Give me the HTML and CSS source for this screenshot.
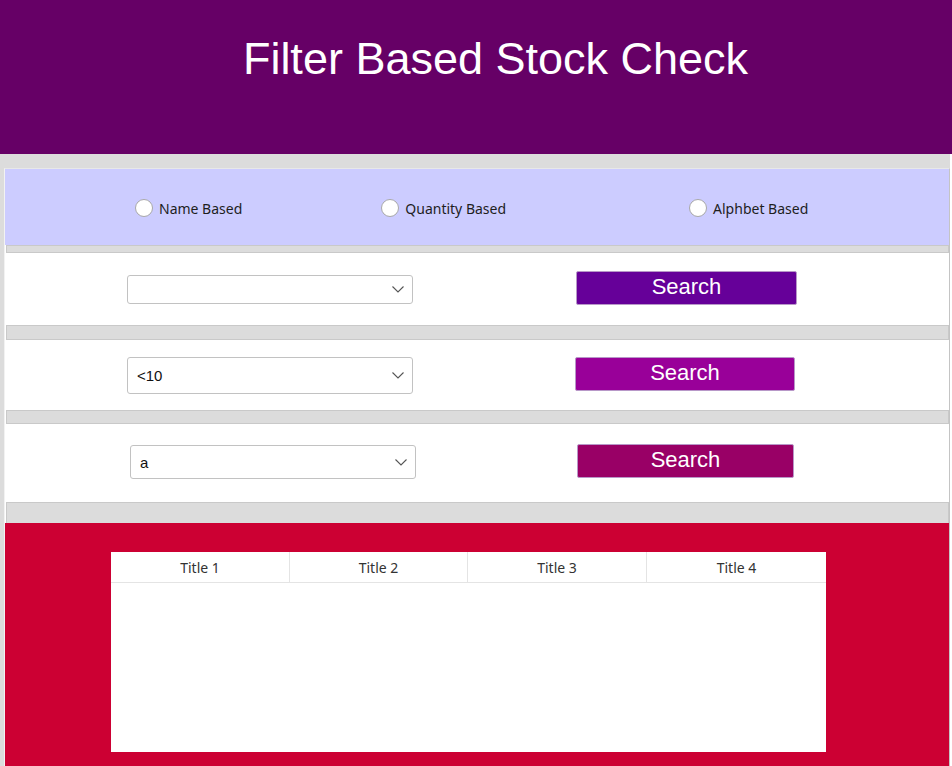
FILE: index.html
```html
<!DOCTYPE html>
<html lang="en">
<head>
<meta charset="utf-8">
<title>Filter Based Stock Check</title>
<link rel="stylesheet" href="styles.css">
</head>
<body>
<header class="top">
  <h1 class="title">Filter Based Stock Check</h1>
</header>
<div class="page">
  <div class="panel">
    <div class="radios">
      <label class="radio r1"><span class="dot"></span>Name Based</label>
      <label class="radio r2"><span class="dot"></span>Quantity Based</label>
      <label class="radio r3"><span class="dot"></span>Alphbet Based</label>
    </div>
    <div class="sep sep1"></div>
    <div class="row row1">
      <div class="select">
        <span class="val"></span>
        <svg class="chev" width="12" height="7" viewBox="0 0 12 7"><path d="M0.5 0.5 L6 6 L11.5 0.5" fill="none" stroke="#555" stroke-width="1.1"/></svg>
      </div>
      <button class="btn btn1">Search</button>
    </div>
    <div class="sep sep2"></div>
    <div class="row row2">
      <div class="select tall">
        <span class="val">&lt;10</span>
        <svg class="chev" width="12" height="7" viewBox="0 0 12 7"><path d="M0.5 0.5 L6 6 L11.5 0.5" fill="none" stroke="#555" stroke-width="1.1"/></svg>
      </div>
      <button class="btn btn2">Search</button>
    </div>
    <div class="sep sep3"></div>
    <div class="row row3">
      <div class="select">
        <span class="val">a</span>
        <svg class="chev" width="12" height="7" viewBox="0 0 12 7"><path d="M0.5 0.5 L6 6 L11.5 0.5" fill="none" stroke="#555" stroke-width="1.1"/></svg>
      </div>
      <button class="btn btn3">Search</button>
    </div>
    <div class="sep sep4"></div>
    <div class="results">
      <div class="table">
        <div class="th">Title 1</div>
        <div class="th">Title 2</div>
        <div class="th">Title 3</div>
        <div class="th">Title 4</div>
      </div>
    </div>
  </div>
</div>
</body>
</html>
```
FILE: styles.css
```css
html, body {
  margin: 0;
  padding: 0;
  background: #ffffff;
  overflow: hidden;
}

.top {
  height: 154px;
  background: #660066;
  box-sizing: border-box;
  padding-top: 33px;
  padding-left: 39px;
}

.title {
  margin: 0;
  font-family: "Liberation Sans", Arial, sans-serif;
  font-weight: normal;
  font-size: 45px;
  line-height: 52px;
  color: #ffffff;
  text-align: center;
}

.page {
  background: #dcdcdc;
  padding-top: 14px;
  padding-left: 4px;
  width: 946px;
}

.panel {
  border-left: 1px solid #f2f2f2;
  border-right: 1px solid #c4c4c4;
  border-top: 1px solid #e8e8e8;
  background: #ffffff;
}

.radios {
  height: 76px;
  background: #ccccff;
  display: flex;
  align-items: center;
  padding-top: 2px;
  box-sizing: border-box;
  font-family: "Noto Sans", "Open Sans", sans-serif;
  font-size: 14px;
  color: #1e1e1e;
}

.radio {
  display: flex;
  align-items: center;
}

.r1 { margin-left: 130px; }
.r2 { margin-left: 139px; }
.r3 { margin-left: 183px; }

.dot {
  width: 18px;
  height: 18px;
  border-radius: 50%;
  background: #ffffff;
  border: 1px solid #a8a8a8;
  box-sizing: border-box;
  margin-right: 6px;
}

.sep {
  background: #dcdcdc;
  border: 1px solid #c9c9c9;
  margin-left: 1px;
  box-sizing: border-box;
}
.sep1 { height: 8px; }
.sep2 { height: 15px; }
.sep3 { height: 14px; }
.sep4 { height: 21px; border-bottom: none; }

.row {
  display: flex;
  align-items: center;
  background: #ffffff;
}
.row1 { height: 72px; padding-left: 122px; }
.row2 { height: 70px; padding-left: 122px; }
.row3 { height: 78px; padding-left: 125px; }

.select {
  width: 286px;
  height: 29px;
  box-sizing: border-box;
  border: 1px solid #c2c2c2;
  border-radius: 3px;
  background: #ffffff;
  display: flex;
  align-items: center;
  justify-content: space-between;
  padding: 0 8px 0 9px;
  font-family: "Liberation Sans", Arial, sans-serif;
  font-size: 15px;
  color: #111111;
}
.select.tall { height: 37px; }
.row3 .select { height: 34px; margin-top: -2px; }

.chev { display: block; }

.btn {
  height: 34px;
  border: 1px solid #b898c8;
  border-radius: 2px;
  color: #ffffff;
  font-family: "Liberation Sans", Arial, sans-serif;
  font-size: 22px;
  padding: 0 0 2px 0;
  line-height: 28px;
}
.btn1 { width: 221px; margin-left: 163px; background: #660099; margin-top: -3px; }
.btn2 { width: 220px; margin-left: 162px; background: #990099; margin-top: -2px; }
.btn3 { width: 217px; margin-left: 161px; background: #990066; margin-top: -4px; }

.results {
  background: #cc0033;
  height: 260px;
  padding-top: 29px;
  padding-left: 106px;
  box-sizing: border-box;
}

.table {
  width: 715px;
  height: 200px;
  background: #ffffff;
  display: grid;
  grid-template-columns: 179px 178px 179px 179px;
  grid-template-rows: 31px;
  align-content: start;
}

.th {
  border-bottom: 1px solid #e4e4e4;
  border-right: 1px solid #e4e4e4;
  display: flex;
  align-items: center;
  justify-content: center;
  font-family: "Noto Sans", "Open Sans", sans-serif;
  font-size: 14px;
  color: #333333;
}
.th:last-child { border-right: none; }
```
